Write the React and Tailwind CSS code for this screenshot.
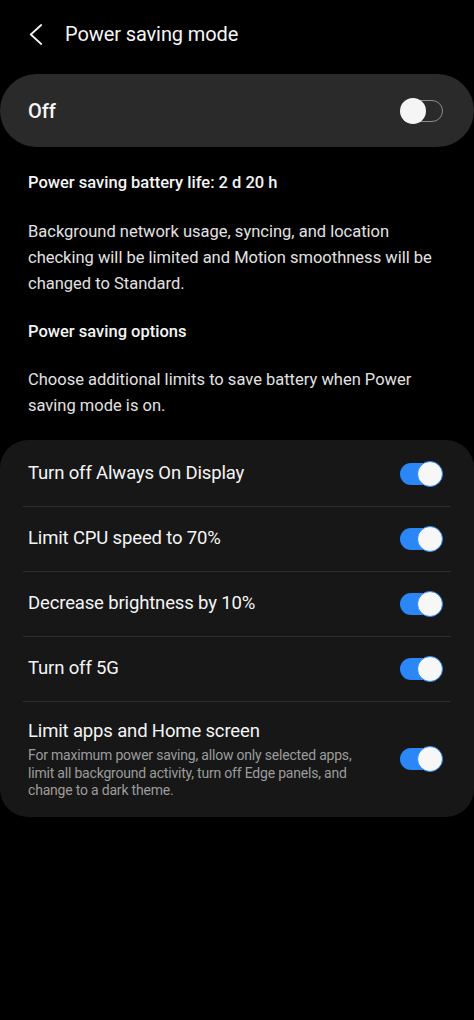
const OPTIONS = [
  { title: "Turn off Always On Display" },
  { title: "Limit CPU speed to 70%" },
  { title: "Decrease brightness by 10%" },
  { title: "Turn off 5G" },
  {
    title: "Limit apps and Home screen",
    lines: [
      "For maximum power saving, allow only selected apps,",
      "limit all background activity, turn off Edge panels, and",
      "change to a dark theme.",
    ],
  },
];

function Toggle({ on }) {
  if (!on)
    return (
      <div className="relative w-[43px] h-[26px] shrink-0">
        <div className="absolute left-[2px] right-0 top-[2px] bottom-[2px] rounded-full border-[1.5px] border-[#8c8c8c]" />
        <div className="absolute left-0 top-0 w-[26px] h-[26px] rounded-full bg-[#f5f5f5]" />
      </div>
    );
  return (
    <div className="relative w-[43px] h-[26px] shrink-0">
      <div className="absolute left-0 right-[1px] top-[2px] bottom-[2px] rounded-full bg-[#2b86f6]" />
      <div className="absolute right-0 top-0 w-[26px] h-[26px] rounded-full bg-[#f7f7f7] border-[1.5px] border-[#2b86f6]" />
    </div>
  );
}

export default function App() {
  return (
    <div
      className="min-h-[1020px] bg-black text-white"
      style={{ fontFamily: "Roboto, 'Noto Sans', sans-serif" }}
    >
      {/* Header */}
      <header className="h-[66px] flex items-center pl-[29px] pt-[2px]">
        <svg width="14" height="21" viewBox="0 0 14 21" fill="none" className="shrink-0">
          <polyline
            points="12.2,1 1.8,10.5 12.2,20"
            stroke="#f5f5f5"
            strokeWidth="1.8"
            strokeLinecap="round"
            strokeLinejoin="round"
          />
        </svg>
        <h1 className="ml-[22px] text-[20px] tracking-[-0.1px] text-[#f5f5f5]">Power saving mode</h1>
      </header>

      {/* Master switch */}
      <div className="mt-[8px] h-[73px] rounded-full bg-[#2a2a2a] flex items-center justify-between pl-[28px] pr-[31px]">
        <span className="text-[20px] font-medium text-[#f5f5f5]">Off</span>
        <Toggle on={false} />
      </div>

      {/* Info text */}
      <section className="px-[28px] text-[16.5px] leading-[26px]">
        <p className="mt-[23px] font-medium text-[#f5f5f5]">Power saving battery life: 2 d 20 h</p>
        <p className="mt-[23px] text-[#e2e2e2]">
          Background network usage, syncing, and location checking will be limited and Motion smoothness will be
          changed to Standard.
        </p>
        <p className="mt-[22px] font-medium text-[#f5f5f5]">Power saving options</p>
        <p className="mt-[22px] text-[#e2e2e2]">
          Choose additional limits to save battery when Power saving mode is on.
        </p>
      </section>

      {/* Options */}
      <div className="mt-[21px] bg-[#171717] rounded-[28px] tracking-[-0.15px]">
        {OPTIONS.map((opt, i) => (
          <div key={opt.title}>
            {i > 0 && <div className="mx-[23px] h-px bg-[#2e2e2e]" />}
            {opt.lines ? (
              <div className="flex items-center justify-between pl-[28px] pr-[31px] pt-[17px] pb-[17px]">
                <div>
                  <p className="text-[18.5px] leading-[24px] text-[#f5f5f5]">{opt.title}</p>
                  <p className="mt-[4px] text-[14px] leading-[17.5px] tracking-[-0.2px] text-[#9c9c9c]">
                    {opt.lines.map((l) => (
                      <span key={l} className="block">
                        {l}
                      </span>
                    ))}
                  </p>
                </div>
                <Toggle on />
              </div>
            ) : (
              <div
                className={`flex items-center justify-between pl-[28px] pr-[31px] ${
                  i === 0 ? "h-[66px] pt-[2px]" : "h-[64px]"
                }`}
              >
                <p className="text-[18.5px] text-[#f5f5f5]">{opt.title}</p>
                <Toggle on />
              </div>
            )}
          </div>
        ))}
      </div>
    </div>
  );
}
